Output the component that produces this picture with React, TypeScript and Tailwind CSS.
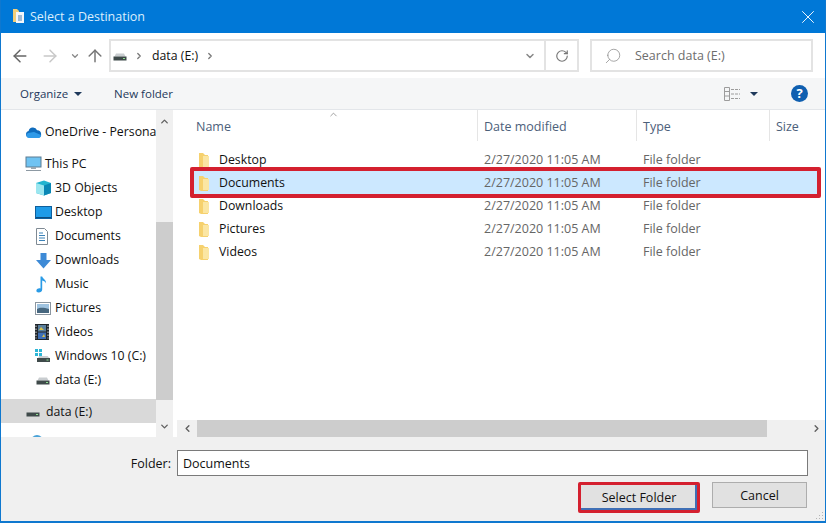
import { ArrowLeft, ArrowRight, ArrowUp, ChevronDown, ChevronLeft, ChevronRight, ChevronUp, RotateCw, Search, X } from "lucide-react";
import type { ReactNode } from "react";

function Drive({ dark = false }: { dark?: boolean }) {
  return (
    <svg width="16" height="16" viewBox="0 0 16 16">
      {!dark && <path d="M2.5 8.5 4 5.5h8l1.500 3z" fill="#c9cdd0" />}
      <rect x="1.500" y="8.500" width="13" height="4" fill="#3f4a4a" />
      <rect x="11" y="10" width="2" height="1" fill="#8fe08f" />
    </svg>
  );
}

function Folder() {
  return (
    <svg width="13" height="17" viewBox="0 0 13 17" className="shrink-0">
      <path d="M1 1h4l2 2h3v13H3l-2-1z" fill="#f6d16e" />
      <path d="M5 4h6v11H5z" fill="#fbe6a3" />
    </svg>
  );
}

const navIcons: Record<string, ReactNode> = {
  cloud: (
    <svg width="17" height="13" viewBox="0 0 17 13">
      <path d="M4 11.500a3.300 3.300 0 0 1-.4-6.500 4.500 4.500 0 0 1 8.500-.8 3.600 3.600 0 0 1 4 3.800 3 3 0 0 1-1.500 3.500z" fill="#0f6cbd" />
      <path d="M4 12a2.600 2.600 0 0 1-1-5l6-1 7 3a3 3 0 0 1-2 3z" fill="#2f9ae8" />
    </svg>
  ),
  pc: (
    <svg width="17" height="16" viewBox="0 0 17 16">
      <rect x="1" y="1" width="15" height="10" fill="#6fc3f2" stroke="#5c7c92" />
      <rect x="6" y="11" width="5" height="2" fill="#9aa7b0" />
      <rect x="1" y="14" width="15" height="1" fill="#8d99a3" />
    </svg>
  ),
  cube: (
    <svg width="17" height="16" viewBox="0 0 17 16">
      <path d="M1 3 9 0.500 16 3 16 13 9 15.500 1 13z" fill="#22b5d0" />
      <path d="M1 3 9 5.500V15.500L1 13z" fill="#9be6ef" />
      <path d="M9 5.500 16 3v10l-7 2.500z" fill="#0a87b5" />
    </svg>
  ),
  desktop: (
    <svg width="17" height="13" viewBox="0 0 17 13">
      <rect x="0.500" y="0.500" width="16" height="12" fill="#1e9be8" stroke="#0f5f9c" />
      <rect x="1" y="11" width="15" height="1" fill="#0c4d80" />
    </svg>
  ),
  doc: (
    <svg width="14" height="17" viewBox="0 0 14 17">
      <path d="M1.500.5h8l3 3v13h-11z" fill="#fff" stroke="#7f8a94" />
      <path d="M4 5h4M4 7.500h6M4 10h6M4 12.500h6" stroke="#3b82b8" />
    </svg>
  ),
  down: (
    <svg width="17" height="17" viewBox="0 0 17 17">
      <path d="M5.500 1h6v7H16l-7.500 8.500L1 8h4.500z" fill="#3d8ad6" />
    </svg>
  ),
  music: (
    <svg width="13" height="17" viewBox="0 0 13 17">
      <path d="M5.500 0.500h1.700c.4 2.500 4.500 3.200 3.800 7-.6-1.800-2-2.600-3.800-3v9c0 1.800-1.600 3-3.500 3S1 15.300 1.500 14c.5-1.400 2.400-2.200 4-1.500z" fill="#2a9be6" />
    </svg>
  ),
  pictures: (
    <svg width="16" height="13" viewBox="0 0 16 13">
      <rect x="0.500" y="0.500" width="15" height="12" fill="#fff" stroke="#8b96a0" />
      <rect x="2" y="2" width="12" height="5" fill="#9fc3e0" />
      <path d="M2 7c3-2 7-1.500 12 0v4H2z" fill="#47677f" />
    </svg>
  ),
  videos: (
    <svg width="14" height="16" viewBox="0 0 14 16">
      <rect width="14" height="16" fill="#20262b" />
      <rect x="3" y="1" width="8" height="6.500" fill="#5a7f9c" />
      <rect x="3" y="8.500" width="8" height="6.500" fill="#3f6fb5" />
      <path d="M4 6l2-3 3 3zM7 13l2-3 1 3z" fill="#d9c14a" />
      <path d="M1 1.500v13M13 1.500v13" stroke="#d5d8da" strokeDasharray="1.500 1.500" />
    </svg>
  ),
  windows: (
    <svg width="16" height="16" viewBox="0 0 16 16">
      <path d="M0 1h3v3H0zM4 1h3v3H4zM0 5h3v3H0zM4 5h3v3H4z" fill="#2cb6d6" />
      <path d="M3 10 4.500 8h8l2 2z" fill="#c9cdd0" />
      <rect x="2" y="10" width="13" height="4" fill="#3f4a4a" />
      <rect x="11.500" y="11.500" width="2" height="1" fill="#8fe08f" />
    </svg>
  ),
  drive: <Drive />,
};

function NavRow({ icon, label, sub = false }: { icon: string; label: string; sub?: boolean }) {
  return (
    <div className={`flex h-6 items-center whitespace-nowrap pt-[2px] text-[12.3px] text-[#111] ${sub ? "pl-[34px]" : "pl-[24px]"}`}>
      <span className="flex w-[20px] shrink-0 items-center">{navIcons[icon]}</span>
      {label}
    </div>
  );
}

function FileRow({ name, selected = false }: { name: string; selected?: boolean }) {
  return (
    <div className={`relative flex h-[23px] items-center pt-[2px] ${selected ? "bg-[#cce8ff]" : ""}`}>
      <span className="flex w-[294px] shrink-0 items-center gap-[8px] pl-[8px] text-[12.3px] text-[#111]">
        <Folder />
        {name}
      </span>
      <span className="w-[159px] shrink-0 whitespace-nowrap text-[#666]">2/27/2020 11:05 AM</span>
      <span className="whitespace-nowrap text-[#666]">File folder</span>
      {selected && <div className="absolute -top-[4px] -bottom-[4px] left-0 right-0 rounded-[2px] border-[4px] border-[#d4202f]" />}
    </div>
  );
}

export default function App() {
  return (
    <div className="flex h-[523px] w-[826px] flex-col overflow-hidden border-x border-b-2 border-[#0f78cf] bg-white font-['Open_Sans','Noto_Sans',sans-serif] text-[12.5px]">
      <div className="flex h-[33px] shrink-0 items-center bg-[#0078d7] pl-[11px] pr-[6px] text-white">
        <svg width="13" height="15" viewBox="0 0 13 15" className="mr-[5px]">
          <path d="M1 0h4l2 2v11H1z" fill="#f2cf7a" />
          <rect x="4" y="3" width="8" height="11" fill="#f3f6fa" />
          <path d="M6 7h4M6 9h4M6 11h4" stroke="#4c7fb0" />
        </svg>
        <span className="pt-[2px] text-[#dbeefc]">Select a Destination</span>
        <X className="ml-auto size-[22px] text-white" strokeWidth={1} />
      </div>

      <div className="flex h-[45px] shrink-0 items-center pl-[12px] pr-[12px]">
        <span className="flex w-[14px] justify-center"><ArrowLeft className="size-[20px] shrink-0 text-[#666]" strokeWidth={1.8} /></span>
        <span className="ml-[16px] flex w-[14px] justify-center"><ArrowRight className="size-[20px] shrink-0 text-[#c8c8c8]" strokeWidth={1.8} /></span>
        <ChevronDown className="ml-[13px] size-[10px] text-[#888]" strokeWidth={3} />
        <span className="ml-[8px] flex w-[14px] justify-center"><ArrowUp className="size-[20px] shrink-0 text-[#777]" strokeWidth={1.8} /></span>
        <div className="ml-[7px] flex h-[33px] w-[470px] shrink-0 items-center border-2 border-[#e3e3e3] pl-[1px]">
          <Drive />
          <ChevronRight className="ml-[6px] size-[10px] text-[#777]" strokeWidth={3} />
          <span className="ml-[8px] pt-[2px] text-[12.3px] text-[#111]">data (E:)</span>
          <ChevronRight className="ml-[7px] size-[10px] text-[#777]" strokeWidth={3} />
          <ChevronDown className="ml-auto mr-[8px] size-[12px] text-[#888]" strokeWidth={3} />
          <div className="flex h-full w-[33px] items-center justify-center border-l-2 border-[#e3e3e3]">
            <RotateCw className="size-[14px] text-[#777]" strokeWidth={2} />
          </div>
        </div>
        <div className="ml-[11px] flex h-[33px] w-[223px] shrink-0 items-center border-2 border-[#e3e3e3] pl-[12px] text-[#6d6d6d]">
          <Search className="mr-[13px] size-[18px] -scale-x-100 text-[#8a8a8a]" strokeWidth={1} />
          <span className="pt-[2px]">Search data (E:)</span>
        </div>
      </div>

      <div className="flex h-[32px] shrink-0 items-center border-b border-[#e3e6ea] bg-[#f5f6f7] pl-[19px] pr-[17px] text-[11.5px] text-[#1e395b]">
        <span>Organize</span>
        <span className="ml-[6px] h-0 w-0 border-x-[4px] border-t-[4px] border-x-transparent border-t-[#1e395b]" />
        <span className="ml-[32px]">New folder</span>
        <svg width="16" height="16" viewBox="0 0 16 16" className="ml-auto">
          <path d="M.5 1.500h5v13h-5zM.5 5.500h5M.5 10h5" fill="none" stroke="#9c9c9c" />
          <path d="M7 3.500h9M7 8h9M7 12.500h9" stroke="#9c9c9c" strokeDasharray="3 1" />
        </svg>
        <span className="ml-[10px] h-0 w-0 border-x-[4px] border-t-[4px] border-x-transparent border-t-[#1e395b]" />
        <span className="ml-[33px] flex size-[17px] items-center justify-center rounded-full bg-[#0f5fb0] text-[13px] font-bold text-white">?</span>
      </div>

      <div className="flex min-h-0 flex-1">
        <div className="flex w-[172px] shrink-0">
          <div className="w-[155px] shrink-0 overflow-hidden pt-[9px]">
            <NavRow icon="cloud" label="OneDrive - Personal" />
            <div className="h-2" />
            <NavRow icon="pc" label="This PC" />
            <NavRow sub icon="cube" label="3D Objects" />
            <NavRow sub icon="desktop" label="Desktop" />
            <NavRow sub icon="doc" label="Documents" />
            <NavRow sub icon="down" label="Downloads" />
            <NavRow sub icon="music" label="Music" />
            <NavRow sub icon="pictures" label="Pictures" />
            <NavRow sub icon="videos" label="Videos" />
            <NavRow sub icon="windows" label="Windows 10 (C:)" />
            <NavRow sub icon="drive" label="data (E:)" />
            <div className="h-2" />
            <div className="flex h-6 items-center bg-[#d9d9d9] pl-[24px] pt-[2px] text-[12.3px] text-[#111]">
              <span className="flex w-[21px] items-center"><Drive dark /></span>
              data (E:)
            </div>
            <svg width="14" height="14" viewBox="0 0 14 14" className="ml-[29px] mt-[11px]">
              <circle cx="7" cy="7" r="6" fill="#4aa3d8" />
            </svg>
          </div>
          <div className="flex w-[17px] shrink-0 flex-col bg-[#f0f0f0]">
            <div className="flex h-[22px] items-center justify-center">
              <ChevronUp className="size-[11px] text-[#606060]" strokeWidth={3} />
            </div>
            <div className="mt-[90px] h-[178px] bg-[#cdcdcd]" />
            <div className="mt-auto flex h-[22px] items-center justify-center">
              <ChevronDown className="size-[11px] text-[#606060]" strokeWidth={3} />
            </div>
          </div>
        </div>

        <div className="ml-[4px] flex min-w-0 flex-1 flex-col">
          <div className="relative flex h-[31px] shrink-0 items-center text-[#4c607a]">
            <ChevronUp className="absolute left-[151px] top-[-1px] size-[11px] text-[#777]" strokeWidth={1.5} />
            <span className="w-[301px] shrink-0 self-stretch border-r border-[#e5e5e5] pl-[19px] pt-[8px]">Name</span>
            <span className="w-[159px] shrink-0 self-stretch border-r border-[#e5e5e5] pl-[6px] pt-[8px]">Date modified</span>
            <span className="w-[133px] shrink-0 self-stretch border-r border-[#e5e5e5] pl-[6px] pt-[8px]">Type</span>
            <span className="self-stretch pl-[6px] pt-[8px]">Size</span>
          </div>
          <div className="mt-[7px] flex-1 pl-[13px] pr-[4px]">
            <FileRow name="Desktop" />
            <FileRow selected name="Documents" />
            <FileRow name="Downloads" />
            <FileRow name="Pictures" />
            <FileRow name="Videos" />
          </div>
          <div className="flex h-[17px] shrink-0 items-center bg-[#f0f0f0]">
            <div className="flex w-[20px] items-center justify-center">
              <ChevronLeft className="size-[11px] text-[#606060]" strokeWidth={3} />
            </div>
            <div className="h-full w-[570px] bg-[#cdcdcd]" />
            <ChevronRight className="ml-auto mr-[3px] size-[11px] text-[#606060]" strokeWidth={3} />
          </div>
        </div>
      </div>

      <div className="relative h-[84px] shrink-0 bg-[#f0f0f0] text-[#111]">
        <div className="flex items-center pt-[13px]">
          <span className="w-[170px] pt-[2px] text-right">Folder:</span>
          <div className="ml-[6px] flex h-[26px] w-[631px] items-center border border-[#7a7a7a] bg-white pl-[5px] pt-[2px]">Documents</div>
        </div>
        <div className="mt-[6px] flex items-start">
          <div className="ml-[577px] flex h-[31px] w-[122px] items-center justify-center rounded-[2px] border-[3px] border-[#d4202f] bg-[#e1e1e1] pt-[2px] shadow-[inset_-2px_-2px_0_#3f6fb5]">Select Folder</div>
          <div className="ml-[12px] flex h-[26px] w-[95px] items-center justify-center border border-[#adadad] bg-[#e1e1e1] pt-[3px]">Cancel</div>
        </div>
        <svg width="9" height="9" viewBox="0 0 9 9" className="absolute bottom-[1px] right-[1px]">
          <path d="M7 1h1v1H7zM4 4h1v1H4zM7 4h1v1H7zM1 7h1v1H1zM4 7h1v1H4zM7 7h1v1H7z" fill="#b5b5b5" />
        </svg>
      </div>
    </div>
  );
}
